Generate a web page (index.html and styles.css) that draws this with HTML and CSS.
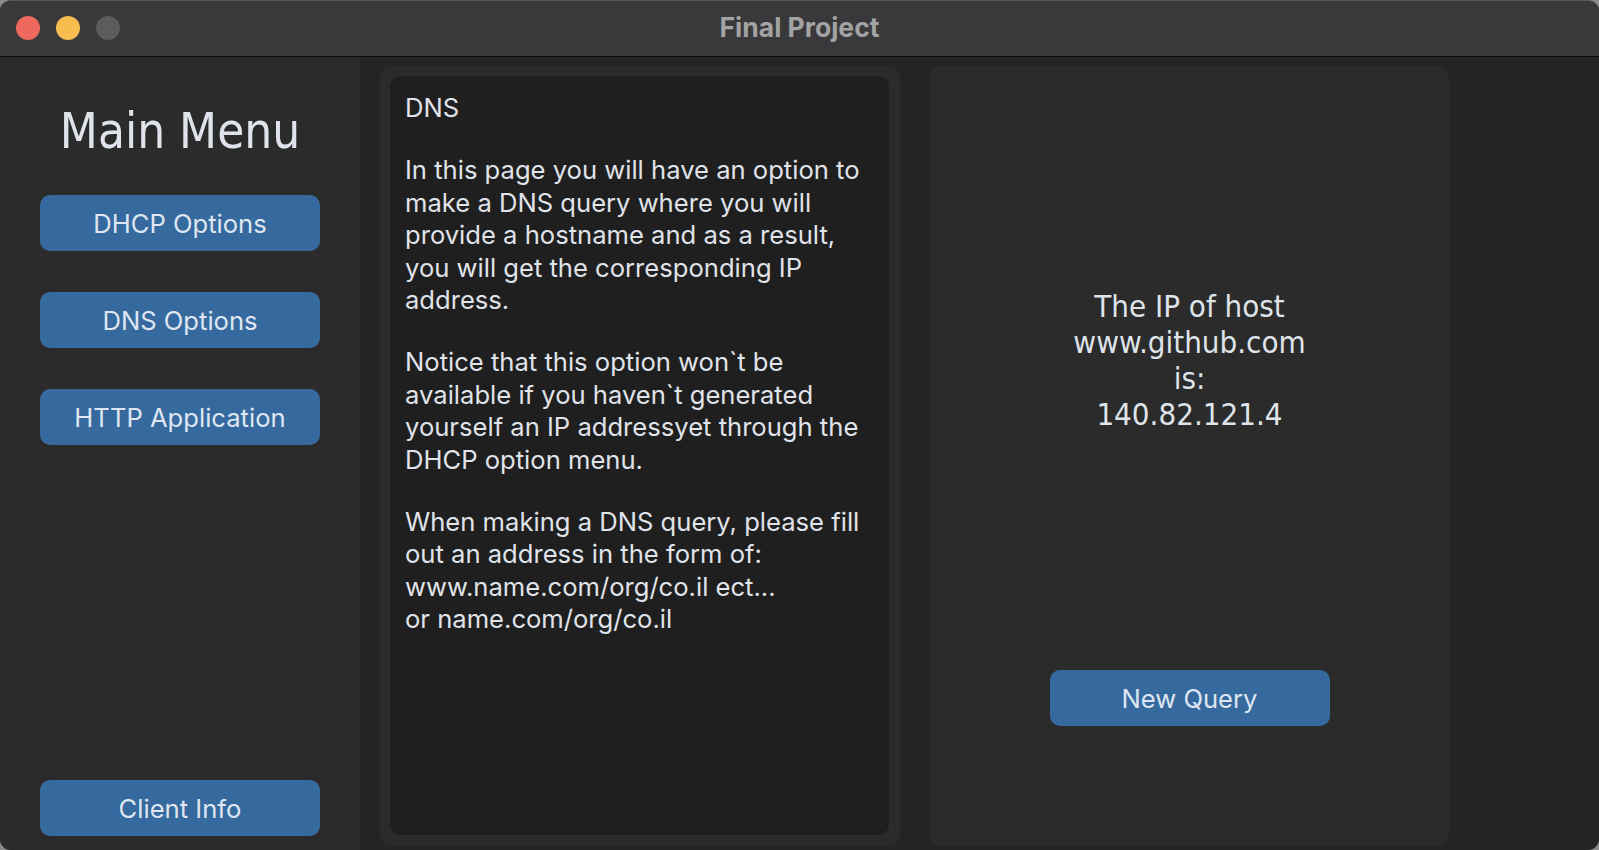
FILE: index.html
```html
<!DOCTYPE html>
<html lang="en">
<head>
    <meta charset="UTF-8"/>
    <title>Final Project</title>
    <link rel="stylesheet" href="styles.css">
</head>
<body>
<div class="window">

    <!-- ========== TITLE BAR ========== -->
    <div class="titlebar">
        <div class="lights">
            <span class="light red"></span>
            <span class="light yellow"></span>
            <span class="light grey"></span>
        </div>
        <div class="title">Final Project</div>
    </div>

    <div class="content">
        <!-- ========== SIDE MENU ========== -->
        <div class="sidebar">
            <h1 class="menu-title">Main Menu</h1>
            <button class="btn menu-btn">DHCP Options</button>
            <button class="btn menu-btn">DNS Options</button>
            <button class="btn menu-btn">HTTP Application</button>
            <button class="btn menu-btn client-btn">Client Info</button>
        </div>

        <!-- ========== DNS PAGE ========== -->
        <div class="page">
            <div class="info-frame">
                <div class="info-text">
                    <p>DNS</p>
                    <p>In this page you will have an option to<br/>make a DNS query where you will<br/>provide a hostname and as a result,<br/>you will get the corresponding IP<br/>address.</p>
                    <p>Notice that this option won`t be<br/>available if you haven`t generated<br/>yourself an IP addressyet through the<br/>DHCP option menu.</p>
                    <p>When making a DNS query, please fill<br/>out an address in the form of:<br/>www.name.com/org/co.il ect...<br/>or name.com/org/co.il</p>
                </div>
            </div>

            <div class="result-panel">
                <div class="result-text">The IP of host<br/>www.github.com<br/>is:<br/>140.82.121.4</div>
                <button class="btn query-btn">New Query</button>
            </div>
        </div>
    </div>
</div>
</body>
</html>
```

FILE: styles.css
```css
/* ========== GLOBAL ========== */
body {
  margin: 0;
  padding: 0;
  background-color: #8a8a8a;
  font-family: "Inter", "Noto Sans", sans-serif;
  color: #dfe3ea;
}

.window {
  width: 1599px;
  height: 850px;
  border-radius: 11px;
  overflow: hidden;
  background-color: #242424;
  display: flex;
  flex-direction: column;
  box-sizing: border-box;
  border-top: 1px solid #5a5a5c;
}

/* ========== TITLE BAR ========== */
.titlebar {
  height: 55px;
  background-color: #39393b;
  border-bottom: 1px solid #0c0c0c;
  display: flex;
  align-items: center;
  position: relative;
  flex-shrink: 0;
}

.lights {
  display: flex;
  gap: 16px;
  padding-left: 16px;
  margin-top: -1px;
}

.light {
  width: 24px;
  height: 24px;
  border-radius: 50%;
  display: block;
}
.light.red { background-color: #ee6a5f; }
.light.yellow { background-color: #f5be4f; }
.light.grey { background-color: #5c5c5e; }

.title {
  position: absolute;
  left: 0;
  right: 0;
  top: 8px;
  text-align: center;
  font-size: 26.5px;
  line-height: 36px;
  font-weight: 700;
  color: #a3a3a3;
  pointer-events: none;
}

/* ========== CONTENT ========== */
.content {
  flex: 1;
  display: flex;
  min-height: 0;
}

.sidebar {
  width: 360px;
  flex-shrink: 0;
  background-color: #2b2b2b;
  box-sizing: border-box;
  padding: 0 40px 14px 40px;
  display: flex;
  flex-direction: column;
}

.menu-title {
  margin: 39px 0 27px 0;
  font-family: "DejaVu Sans Condensed", "DejaVu Sans", sans-serif;
  font-stretch: condensed;
  font-weight: normal;
  font-size: 49px;
  line-height: 72px;
  text-align: center;
  color: #dfe3ea;
}

.btn {
  display: block;
  height: 56px;
  border: none;
  border-radius: 10px;
  background-color: #366a9f;
  color: #dfe6f1;
  font-family: "Inter", "Noto Sans", sans-serif;
  font-size: 25.6px;
  cursor: pointer;
  padding: 0;
}

.menu-btn {
  width: 100%;
  margin-bottom: 41px;
}

.client-btn {
  margin-top: auto;
  margin-bottom: 0;
}

/* ========== DNS PAGE ========== */
.page {
  flex: 1;
  display: flex;
  padding: 9px 0 4px 20px;
  gap: 30px;
}

.info-frame {
  width: 520px;
  background-color: #2b2b2b;
  border-radius: 12px;
  padding: 10px 11px 11px 10px;
  box-sizing: border-box;
  display: flex;
}

.info-text {
  flex: 1;
  background-color: #1e1f1e;
  border-radius: 11px;
  padding: 16px 8px 0 15px;
  font-size: 25.6px;
  line-height: 32.4px;
  color: #e0e3ea;
}

.info-text p {
  margin: 0 0 30px 0;
}

.result-panel {
  width: 519px;
  background-color: #2b2b2b;
  border-radius: 12px;
  display: flex;
  flex-direction: column;
  align-items: center;
}

.result-text {
  margin-top: 222px;
  font-family: "DejaVu Sans Condensed", "DejaVu Sans", sans-serif;
  font-stretch: condensed;
  font-size: 31px;
  line-height: 36px;
  text-align: center;
  color: #dfe3ea;
}

.query-btn {
  width: 280px;
  margin-top: 238px;
}
```
